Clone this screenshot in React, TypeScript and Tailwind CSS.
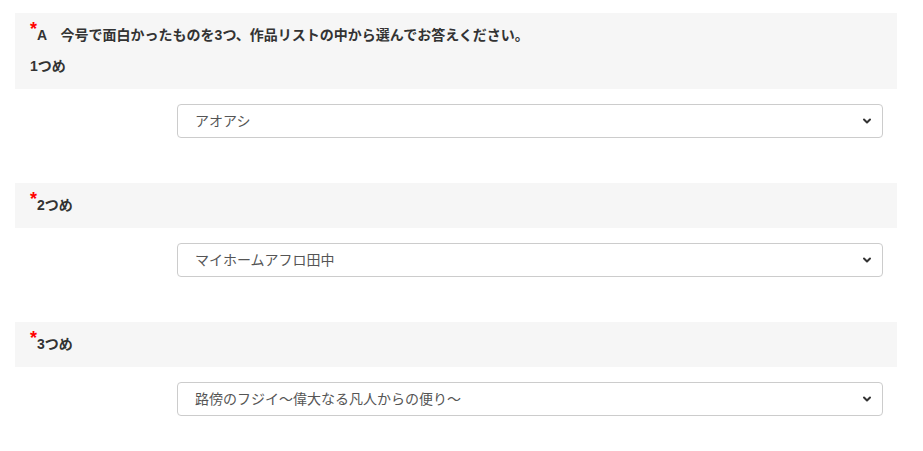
import { ChevronDown } from 'lucide-react'

type Question = {
  label: React.ReactNode
  value: string
}

const font = "font-['Liberation_Sans','Noto_Sans_CJK_JP',sans-serif]"

function SelectBox({ value }: { value: string }) {
  return (
    <div className="relative ml-[162px] mr-[14px] mt-[15px]">
      <select
        defaultValue={value}
        className={`h-[34px] w-full appearance-none rounded border border-[#cccccc] bg-white pl-[17px] pr-8 text-[14px] text-[#555555] outline-none ${font}`}
      >
        <option value={value}>{value}</option>
      </select>
      <ChevronDown
        size={12}
        strokeWidth={4}
        className="pointer-events-none absolute right-[10px] top-[11px] text-[#333333]"
      />
    </div>
  )
}

function Asterisk() {
  return <span className="relative -top-[5px] text-[18px] font-bold leading-[0px] text-[#ff0000]">*</span>
}

function QuestionBlock({ label, value }: Question) {
  return (
    <div className="mb-[45px]">
      <div className="bg-[#f6f6f6] px-[15px] py-[15px] text-[14px] font-bold leading-[15px] text-[#333333]">{label}</div>
      <SelectBox value={value} />
    </div>
  )
}

export default function App() {
  return (
    <div className={`min-h-[451px] bg-white pl-[15px] pr-[26px] pt-[13px] ${font}`}>
      <QuestionBlock
        label={
          <>
            <div>
              <Asterisk />
              A　今号で面白かったものを3つ、作品リストの中から選んでお答えください。
            </div>
            <div className="mt-[16px]">1つめ</div>
          </>
        }
        value="アオアシ"
      />
      <QuestionBlock
        label={
          <div>
            <Asterisk />
            2つめ
          </div>
        }
        value="マイホームアフロ田中"
      />
      <QuestionBlock
        label={
          <div>
            <Asterisk />
            3つめ
          </div>
        }
        value="路傍のフジイ～偉大なる凡人からの便り～"
      />
    </div>
  )
}
